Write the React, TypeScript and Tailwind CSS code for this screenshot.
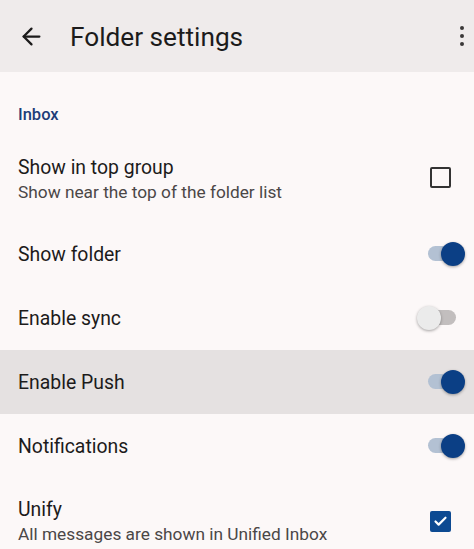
import { ArrowLeft, Check } from "lucide-react";

const Toggle = ({ on }: { on: boolean }) => (
  <div className="relative h-[24px] w-[40px]">
    <div
      className={`absolute top-[4px] h-[15px] w-[34px] rounded-full ${
        on ? "right-[3px] bg-[#b3c1d3]" : "right-[9px] bg-[#c2bebe]"
      }`}
    />
    <div
      className={`absolute top-0 h-[24px] w-[24px] rounded-full shadow-[0_1px_3px_rgba(0,0,0,0.35)] ${
        on ? "right-0 bg-[#0b3f85]" : "left-[-8px] bg-[#ebebeb]"
      }`}
    />
  </div>
);

const CheckBox = ({ checked }: { checked: boolean }) =>
  checked ? (
    <div className="mr-[14px] flex h-[21px] w-[21px] items-center justify-center rounded-[2px] bg-[#0d4a92]">
      <Check className="h-[15px] w-[15px] text-white" strokeWidth={3.5} />
    </div>
  ) : (
    <div className="mr-[14px] mb-[4px] h-[21px] w-[21px] rounded-[2px] border-2 border-[#333]" />
  );

const Row = ({
  title,
  summary,
  right,
  active,
}: {
  title: string;
  summary?: string;
  right: React.ReactNode;
  active?: boolean;
}) => (
  <div
    className={`flex items-center justify-between pl-[18px] pr-[9px] ${
      summary ? "h-[86px]" : "h-[64px]"
    } ${active ? "bg-[#e5e1e1]" : ""}`}
  >
    <div className="mt-[2px] flex flex-col">
      <span className="text-[19.4px] leading-[24px] text-[#1c1b1b]">{title}</span>
      {summary && (
        <span className="text-[17.3px] leading-[24px] text-[#4b4747]">{summary}</span>
      )}
    </div>
    <div className="flex justify-end">{right}</div>
  </div>
);

export default function App() {
  return (
    <div
      className="h-[549px] w-[474px] overflow-hidden bg-[#fcf8f8]"
      style={{ fontFamily: "Roboto, 'Noto Sans', sans-serif" }}
    >
      {/* App bar */}
      <div className="flex h-[72px] items-center bg-[#efebeb] pl-[18px]">
        <ArrowLeft className="h-[27px] w-[27px] text-[#1c1b1b]" strokeWidth={2} />
        <span className="ml-[25px] mt-[3px] flex-1 text-[26.2px] text-[#1c1b1b]">
          Folder settings
        </span>
        <div className="mr-[10px] flex flex-col items-center gap-[3.5px]">
          <span className="h-[4.5px] w-[4.5px] rounded-full bg-[#3a3838]" />
          <span className="h-[4.5px] w-[4.5px] rounded-full bg-[#3a3838]" />
          <span className="h-[4.5px] w-[4.5px] rounded-full bg-[#3a3838]" />
        </div>
      </div>

      {/* Category */}
      <div className="flex h-[64px] items-end pb-[8px] pl-[18px]">
        <span className="text-[16.5px] font-medium text-[#1d3d78]">Inbox</span>
      </div>

      <Row
        title="Show in top group"
        summary="Show near the top of the folder list"
        right={<CheckBox checked={false} />}
      />
      <Row title="Show folder" right={<Toggle on />} />
      <Row title="Enable sync" right={<Toggle on={false} />} />
      <Row title="Enable Push" right={<Toggle on />} active />
      <Row title="Notifications" right={<Toggle on />} />
      <Row
        title="Unify"
        summary="All messages are shown in Unified Inbox"
        right={<CheckBox checked />}
      />
    </div>
  );
}
